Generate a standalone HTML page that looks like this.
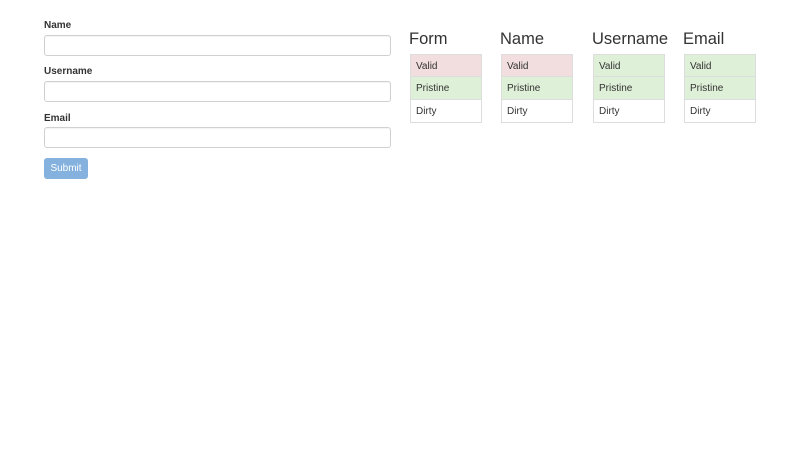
<!DOCTYPE html>
<html><head><style>
*{box-sizing:border-box;margin:0;padding:0}
body{width:800px;height:450px;background:#fff;font-family:"Liberation Sans",sans-serif;color:#333;position:relative;overflow:hidden}
.lbl{position:absolute;left:44px;font-size:10px;font-weight:bold}
.inp{position:absolute;left:44px;width:347px;height:21px;border:1px solid #d0d0d0;border-radius:3px;box-shadow:inset 0 1px 1px rgba(0,0,0,.05)}
.btn{position:absolute;left:44px;top:158px;width:44px;height:21px;background:#84b1dd;border-radius:3px;color:#fff;font-size:10px;text-align:center;line-height:21px}
.col{position:absolute;top:30px;width:72px}
.col h3{font-size:16.5px;font-weight:normal;height:24px;line-height:19px;margin-left:-1px}
.cell{height:23px;border:1px solid #ddd;border-top:none;font-size:10px;line-height:24px;padding-left:5px}
.cell:first-of-type{border-top:1px solid #ddd}
.r{background:#f2dede}.g{background:#dff0d8}
</style></head><body>
<div class="lbl" style="top:20px">Name</div>
<div class="inp" style="top:35px"></div>
<div class="lbl" style="top:66px">Username</div>
<div class="inp" style="top:81px"></div>
<div class="lbl" style="top:113px">Email</div>
<div class="inp" style="top:127px"></div>
<div class="btn">Submit</div>
<div class="col" style="left:410px"><h3>Form</h3><div class="cell r">Valid</div><div class="cell g">Pristine</div><div class="cell">Dirty</div></div>
<div class="col" style="left:501px"><h3>Name</h3><div class="cell r">Valid</div><div class="cell g">Pristine</div><div class="cell">Dirty</div></div>
<div class="col" style="left:593px"><h3>Username</h3><div class="cell g">Valid</div><div class="cell g">Pristine</div><div class="cell">Dirty</div></div>
<div class="col" style="left:684px"><h3>Email</h3><div class="cell g">Valid</div><div class="cell g">Pristine</div><div class="cell">Dirty</div></div>
</body></html>
